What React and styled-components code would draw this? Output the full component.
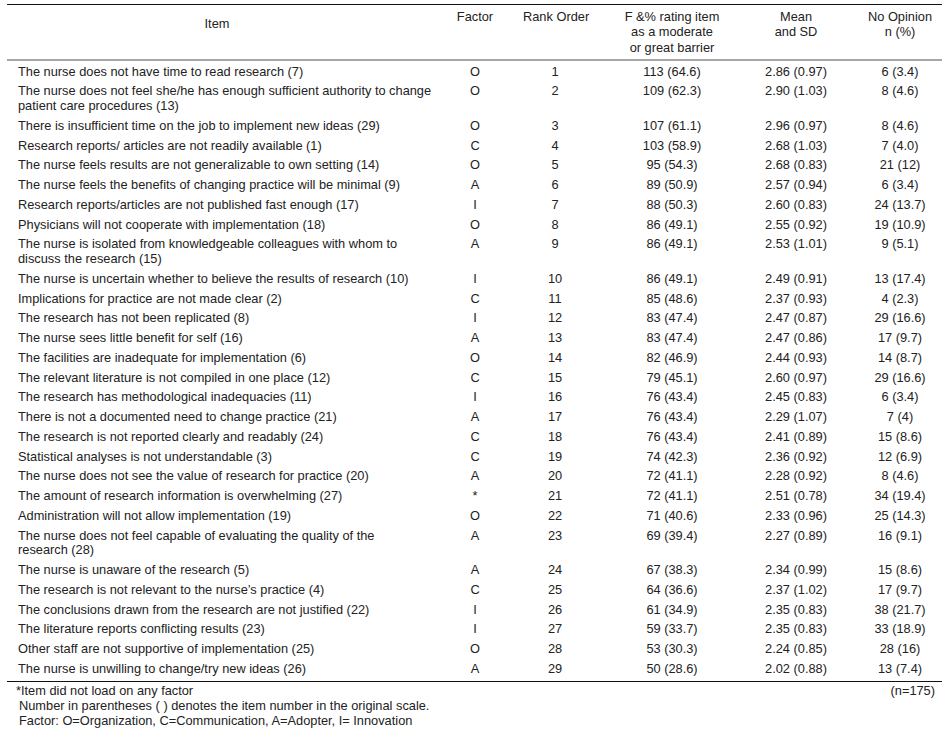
import React from "react";
import styled, { createGlobalStyle } from "styled-components";

const Global = createGlobalStyle`
  html, body { margin: 0; padding: 0; background: #ffffff; }
  body { font-family: "Liberation Sans", Arial, sans-serif; color: #222222; }
`;

const Page = styled.div`
  padding: 4px 3px 0 7px;
  width: 935px;
`;

const Table = styled.table`
  width: 935px;
  table-layout: fixed;
  border-collapse: collapse;
  font-size: 12.8px;
  border-bottom: 1px solid #111;
`;

const HeadRow = styled.tr`
  border-top: 1px solid #111;
  border-bottom: 2px solid #a6a6a6;
`;

const Th = styled.th`
  font-weight: normal;
  text-align: center;
  vertical-align: top;
  white-space: nowrap;
  line-height: 15.5px;
  padding: ${(p) => p.$top || 3.5}px 0 3.5px ${(p) => p.$left || 0}px;
`;

const Tr = styled.tr`
  &:first-child td { padding-top: 4px; }
  &:last-child td { padding-bottom: 4px; }
`;

const Td = styled.td`
  vertical-align: top;
  line-height: 14.75px;
  padding: 2.5px 0 2.5px ${(p) => p.$left || 0}px;
  text-align: ${(p) => (p.$item ? "left" : "center")};
  white-space: ${(p) => (p.$item ? "pre" : "nowrap")};
  overflow: visible;
`;

const Notes = styled.div`
  display: flex;
  justify-content: space-between;
  font-size: 12.8px;
  line-height: 15px;
  padding-top: 1.5px;
`;

const NoteList = styled.div`
  display: flex;
  flex-direction: column;
`;

const Note = styled.div`
  padding-left: ${(p) => p.$indent}px;
`;

const Count = styled.div`
  padding-right: 7px;
`;

const rows = [
  ["The nurse does not have time to read research (7)", "O", "1", "113 (64.6)", "2.86 (0.97)", "6 (3.4)"],
  ["The nurse does not feel she/he has enough sufficient authority to change\npatient care procedures (13)", "O", "2", "109 (62.3)", "2.90 (1.03)", "8 (4.6)"],
  ["There is insufficient time on the job to implement new ideas (29)", "O", "3", "107 (61.1)", "2.96 (0.97)", "8 (4.6)"],
  ["Research reports/ articles are not readily available (1)", "C", "4", "103 (58.9)", "2.68 (1.03)", "7 (4.0)"],
  ["The nurse feels results are not generalizable to own setting (14)", "O", "5", "95 (54.3)", "2.68 (0.83)", "21 (12)"],
  ["The nurse feels the benefits of changing practice will be minimal (9)", "A", "6", "89 (50.9)", "2.57 (0.94)", "6 (3.4)"],
  ["Research reports/articles are not published fast enough (17)", "I", "7", "88 (50.3)", "2.60 (0.83)", "24 (13.7)"],
  ["Physicians will not cooperate with implementation (18)", "O", "8", "86 (49.1)", "2.55 (0.92)", "19 (10.9)"],
  ["The nurse is isolated from knowledgeable colleagues with whom to\ndiscuss the research (15)", "A", "9", "86 (49.1)", "2.53 (1.01)", "9 (5.1)"],
  ["The nurse is uncertain whether to believe the results of research (10)", "I", "10", "86 (49.1)", "2.49 (0.91)", "13 (17.4)"],
  ["Implications for practice are not made clear (2)", "C", "11", "85 (48.6)", "2.37 (0.93)", "4 (2.3)"],
  ["The research has not been replicated (8)", "I", "12", "83 (47.4)", "2.47 (0.87)", "29 (16.6)"],
  ["The nurse sees little benefit for self (16)", "A", "13", "83 (47.4)", "2.47 (0.86)", "17 (9.7)"],
  ["The facilities are inadequate for implementation (6)", "O", "14", "82 (46.9)", "2.44 (0.93)", "14 (8.7)"],
  ["The relevant literature is not compiled in one place (12)", "C", "15", "79 (45.1)", "2.60 (0.97)", "29 (16.6)"],
  ["The research has methodological inadequacies (11)", "I", "16", "76 (43.4)", "2.45 (0.83)", "6 (3.4)"],
  ["There is not a documented need to change practice (21)", "A", "17", "76 (43.4)", "2.29 (1.07)", "7 (4)"],
  ["The research is not reported clearly and readably (24)", "C", "18", "76 (43.4)", "2.41 (0.89)", "15 (8.6)"],
  ["Statistical analyses is not understandable (3)", "C", "19", "74 (42.3)", "2.36 (0.92)", "12 (6.9)"],
  ["The nurse does not see the value of research for practice (20)", "A", "20", "72 (41.1)", "2.28 (0.92)", "8 (4.6)"],
  ["The amount of research information is overwhelming (27)", "*", "21", "72 (41.1)", "2.51 (0.78)", "34 (19.4)"],
  ["Administration will not allow implementation (19)", "O", "22", "71 (40.6)", "2.33 (0.96)", "25 (14.3)"],
  ["The nurse does not feel capable of evaluating the quality of the\nresearch (28)", "A", "23", "69 (39.4)", "2.27 (0.89)", "16 (9.1)"],
  ["The nurse is unaware of the research (5)", "A", "24", "67 (38.3)", "2.34 (0.99)", "15 (8.6)"],
  ["The research is not relevant to the nurse\u2019s practice (4)", "C", "25", "64 (36.6)", "2.37 (1.02)", "17 (9.7)"],
  ["The conclusions drawn from the research are not justified (22)", "I", "26", "61 (34.9)", "2.35 (0.83)", "38 (21.7)"],
  ["The literature reports conflicting results (23)", "I", "27", "59 (33.7)", "2.35 (0.83)", "33 (18.9)"],
  ["Other staff are not supportive of implementation (25)", "O", "28", "53 (30.3)", "2.24 (0.85)", "28 (16)"],
  ["The nurse is unwilling to change/try new ideas (26)", "A", "29", "50 (28.6)", "2.02 (0.88)", "13 (7.4)"],
];

export default function App() {
  return (
    <Page>
      <Global />
      <Table>
        <colgroup>
          <col style={{ width: 420 }} />
          <col style={{ width: 96 }} />
          <col style={{ width: 64 }} />
          <col style={{ width: 170 }} />
          <col style={{ width: 78 }} />
          <col style={{ width: 107 }} />
        </colgroup>
        <thead>
          <HeadRow>
            <Th $top={11}>Item</Th>
            <Th>Factor</Th>
            <Th>Rank Order</Th>
            <Th>
              F &amp;% rating item
              <br />
              as a moderate
              <br />
              or great barrier
            </Th>
            <Th>
              Mean
              <br />
              and SD
            </Th>
            <Th $left={23}>
              No Opinion
              <br />n (%)
            </Th>
          </HeadRow>
        </thead>
        <tbody>
          {rows.map((r, i) => (
            <Tr key={i}>
              <Td $item $left={11}>{r[0]}</Td>
              <Td>{r[1]}</Td>
              <Td>{r[2]}</Td>
              <Td>{r[3]}</Td>
              <Td>{r[4]}</Td>
              <Td $left={23}>{r[5]}</Td>
            </Tr>
          ))}
        </tbody>
      </Table>
      <Notes>
        <NoteList>
          <Note $indent={9}>*Item did not load on any factor</Note>
          <Note $indent={12}>Number in parentheses ( ) denotes the item number in the original scale.</Note>
          <Note $indent={12}>Factor: O=Organization, C=Communication, A=Adopter, I= Innovation</Note>
        </NoteList>
        <Count>(n=175)</Count>
      </Notes>
    </Page>
  );
}
